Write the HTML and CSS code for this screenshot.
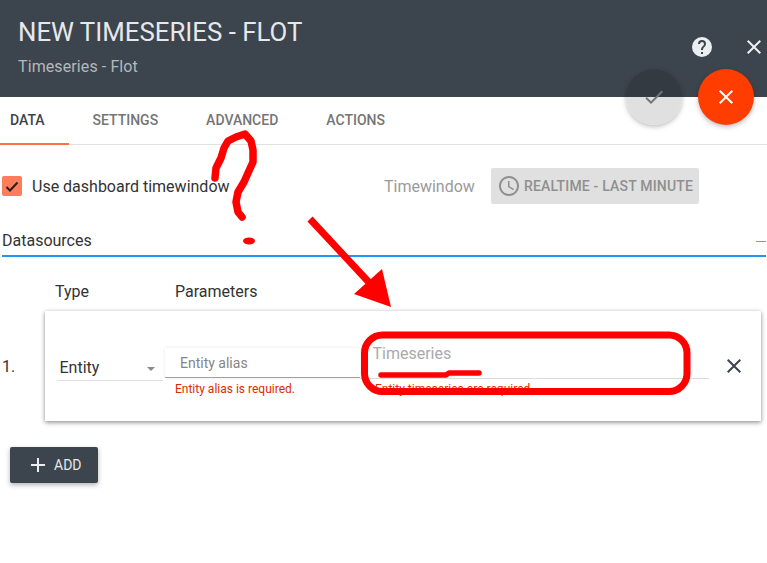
FILE: index.html
```html
<!DOCTYPE html>
<html lang="en">
<head>
<meta charset="utf-8">
<title>New Timeseries - Flot</title>
<link rel="stylesheet" href="styles.css">
</head>
<body>
<div class="page">
  <header class="header">
    <div class="titles">
      <h1 class="title">NEW TIMESERIES - FLOT</h1>
      <div class="subtitle">Timeseries - Flot</div>
    </div>
    <div class="header-actions">
      <svg class="icon-help" viewBox="0 0 24 24"><path fill="#eceff1" d="M12 2a10 10 0 1 0 0 20 10 10 0 0 0 0-20zm1 17h-2v-2h2v2zm2.07-7.75-.9.92C13.45 12.9 13 13.5 13 15h-2v-.5c0-1.1.45-2.1 1.17-2.83l1.24-1.26c.37-.36.59-.86.59-1.41a2 2 0 0 0-4 0H8a4 4 0 0 1 8 0c0 .88-.36 1.68-.93 2.25z"/></svg>
      <svg class="icon-close" viewBox="0 0 24 24"><path fill="#eceff1" d="M19 6.41 17.59 5 12 10.59 6.41 5 5 6.41 10.59 12 5 17.59 6.41 19 12 13.41 17.59 19 19 17.59 13.41 12z"/></svg>
    </div>
  </header>

  <nav class="tabs">
    <div class="tab tab-active">DATA</div>
    <div class="tab tab-settings">SETTINGS</div>
    <div class="tab tab-advanced">ADVANCED</div>
    <div class="tab tab-actions">ACTIONS</div>
  </nav>

  <main class="content">
    <div class="timewindow-row">
      <div class="check-group">
        <span class="checkbox">
          <svg viewBox="0 0 20 20"><path d="M4.500 11 8 14.500 15.500 6.500" fill="none" stroke="#212121" stroke-width="2"/></svg>
        </span>
        <span class="check-label">Use dashboard timewindow</span>
      </div>
      <div class="timewindow-group">
        <span class="timewindow-label">Timewindow</span>
        <div class="timewindow-btn">
          <svg class="icon-clock" viewBox="0 0 24 24"><path fill="#8f8f8f" d="M11.990 2C6.470 2 2 6.480 2 12s4.470 10 9.990 10C17.520 22 22 17.520 22 12S17.520 2 11.990 2zM12 20c-4.420 0-8-3.580-8-8s3.580-8 8-8 8 3.580 8 8-3.580 8-8 8zm.5-13H11v6l5.250 3.150.75-1.230-4.500-2.670z"/></svg>
          <span>REALTIME - LAST MINUTE</span>
        </div>
      </div>
    </div>

    <div class="section-head">
      <span>Datasources</span>
      <span class="collapse"></span>
    </div>

    <div class="columns">
      <span class="col-type">Type</span>
      <span>Parameters</span>
    </div>

    <div class="source-row">
      <span class="source-index">1.</span>
      <div class="card">
        <div class="select">
          <span>Entity</span>
          <span class="caret"></span>
        </div>
        <div class="alias-field">
          <div class="alias-input">Entity alias</div>
          <div class="error alias-error">Entity alias is required.</div>
        </div>
        <div class="series-field">
          <div class="series-input">Timeseries</div>
          <div class="error series-error">Entity timeseries are required.</div>
        </div>
        <svg class="icon-remove" viewBox="0 0 24 24"><path fill="#3c444d" d="M19 6.410 17.590 5 12 10.590 6.410 5 5 6.410 10.590 12 5 17.590 6.410 19 12 13.410 17.590 19 19 17.590 13.410 12z"/></svg>
      </div>
    </div>

    <button class="add-btn" type="button">
      <svg class="icon-plus" viewBox="0 0 24 24"><path fill="#eceff1" d="M19 13h-6v6h-2v-6H5v-2h6V5h2v6h6v2z"/></svg>
      <span>ADD</span>
    </button>
  </main>

  <div class="fab fab-apply">
    <svg viewBox="0 0 24 24"><path fill="#757575" d="M9 16.170 4.830 12l-1.420 1.410L9 19 21 7l-1.410-1.410z"/></svg>
  </div>
  <div class="fab fab-cancel">
    <svg viewBox="0 0 24 24"><path fill="#fff" d="M19 6.410 17.590 5 12 10.590 6.410 5 5 6.410 10.590 12 5 17.590 6.410 19 12 13.410 17.590 19 19 17.590 13.410 12z"/></svg>
  </div>

  <svg class="scribbles" viewBox="0 0 767 563">
    <path class="mark mark-q" d="M215 178 L216 168 L221 158 L224 148 L228 141 L236 137 L245 134 L251 141 L253 150 L253 162 L248 173 L244 182 L238 192 L236 202 L238 212 L242 217"/>
    <ellipse class="mark-fill" cx="249" cy="241" rx="6" ry="3.400"/>
    <path class="mark mark-arrow" d="M310 219 L378 292"/>
    <polygon class="mark-fill" points="354,294 382,269 391,307"/>
    <rect class="mark mark-box" x="364.500" y="335" width="322.500" height="56.500" rx="18"/>
    <path class="mark mark-under" d="M381 375 L446 375 L449 373 L479 373"/>
  </svg>
</div>
</body>
</html>
```

FILE: styles.css
```css
* { box-sizing: border-box; }

html, body {
  margin: 0;
  padding: 0;
  background: #fff;
}

.page {
  position: relative;
  width: 767px;
  height: 563px;
  overflow: hidden;
  font-family: Roboto, "Liberation Sans", sans-serif;
  color: #333;
}

.header {
  height: 97px;
  background: #3c444d;
  display: flex;
  justify-content: space-between;
  padding: 18px 0 0 18px;
}

.title {
  margin: 0;
  font-size: 25.800px;
  line-height: 28px;
  font-weight: 400;
  color: #e6e8ea;
}

.subtitle {
  margin-top: 12px;
  font-size: 16px;
  letter-spacing: .1px;
  line-height: 18px;
  color: #b4b8bc;
}

.header-actions {
  display: flex;
  gap: 28px;
  padding: 17px 1px 0 0;
}

.icon-help, .icon-close {
  width: 24px;
  height: 24px;
}

.tabs {
  height: 48px;
  display: flex;
  border-bottom: 1px solid #e0e0e0;
}

.tab {
  font-size: 14px;
  font-weight: 500;
  line-height: 47px;
  color: #757575;
  height: 48px;
}

.tab-active {
  width: 69px;
  padding-left: 10px;
  color: #3c444d;
  border-bottom: 2px solid #ff7043;
}

.tab-settings { margin-left: 23.500px; }
.tab-advanced { margin-left: 48px; }
.tab-actions { margin-left: 48px; }

.content {
  padding: 23px 0 0 2px;
}

.timewindow-row {
  display: flex;
  align-items: center;
  height: 36px;
}

.check-group {
  display: flex;
  align-items: center;
  width: 382px;
}

.checkbox {
  width: 20px;
  height: 20px;
  border-radius: 2px;
  background: #ff7d5c;
  display: flex;
}

.check-label {
  margin-left: 10px;
  font-size: 16px;
  color: #333;
}

.timewindow-group {
  display: flex;
  align-items: center;
}

.timewindow-label {
  font-size: 16px;
  color: #9a9a9a;
  width: 107px;
}

.timewindow-btn {
  width: 208px;
  height: 36px;
  background: #e0e0e0;
  border-radius: 2px;
  display: flex;
  align-items: center;
  gap: 3px;
  padding-left: 6px;
  font-size: 14px;
  font-weight: 500;
  letter-spacing: .18px;
  color: #8f8f8f;
}

.icon-clock {
  width: 24px;
  height: 24px;
}

.section-head {
  margin-top: 17px;
  height: 36px;
  width: 764px;
  padding-top: 10px;
  border-bottom: 2px solid #2196f3;
  display: flex;
  justify-content: space-between;
  font-size: 16px;
  line-height: 19px;
  color: #333;
}

.collapse {
  width: 10px;
  height: 1px;
  margin-top: 10px;
  background: #5aa6e0;
}

.columns {
  display: flex;
  margin-top: 25px;
  padding-left: 53px;
  font-size: 16px;
  line-height: 19px;
  color: #333;
}

.col-type { width: 120px; }

.source-row {
  display: flex;
  align-items: center;
  margin-top: 10px;
}

.source-index {
  width: 43px;
  font-size: 16px;
}

.card {
  width: 716px;
  height: 110px;
  background: #fff;
  box-shadow: 0 1px 4px rgba(0,0,0,.3), 0 2px 5px rgba(0,0,0,.2);
  display: flex;
  align-items: flex-start;
  padding: 37px 0 0 12px;
}

.select {
  width: 106px;
  height: 33px;
  padding: 10px 2px 0 2.500px;
  border-bottom: 1px solid #e0e0e0;
  display: flex;
  justify-content: space-between;
  font-size: 16px;
  line-height: 20px;
  color: #333;
}

.caret {
  width: 0;
  height: 0;
  margin: 9px 6px 0 0;
  border: 4px solid transparent;
  border-top: 4px solid #8a8a8a;
  border-bottom: 0;
}

.alias-field {
  width: 195px;
  margin-left: 2px;
}

.alias-input {
  height: 30px;
  padding: 6px 0 0 15px;
  font-size: 14px;
  line-height: 18px;
  color: #858585;
  background: #fff;
  border-bottom: 1px solid #a0a0a0;
  box-shadow: 0 0 3px rgba(0,0,0,.1);
}

.error {
  font-size: 12px;
  line-height: 14px;
  color: #dd2c00;
}

.alias-error {
  margin: 4px 0 0 10px;
}

.series-field {
  width: 349px;
  margin-top: -4px;
}

.series-input {
  height: 35px;
  padding: 0 0 0 12.500px;
  font-size: 16px;
  line-height: 20px;
  color: #aaa;
  border-bottom: 1px solid #dcdcdc;
}

.series-error {
  margin: 3px 0 0 15px;
}

.icon-remove {
  width: 24px;
  height: 24px;
  margin: 6px 0 0 13px;
}

.add-btn {
  display: flex;
  align-items: center;
  width: 88px;
  height: 36px;
  margin: 26px 0 0 8px;
  padding: 0 0 0 16px;
  border: 0;
  border-radius: 2px;
  background: #3c444d;
  box-shadow: 0 2px 5px rgba(0,0,0,.3);
  color: #e6e8ea;
  font-family: inherit;
  font-size: 14px;
  font-weight: 400;
  gap: 4px;
}

.icon-plus {
  width: 24px;
  height: 24px;
}

.fab {
  position: absolute;
  top: 69px;
  width: 56px;
  height: 56px;
  border-radius: 50%;
  display: flex;
  align-items: center;
  justify-content: center;
  box-shadow: 0 2px 5px rgba(0,0,0,.26);
}

.fab svg {
  width: 24px;
  height: 24px;
}

.fab-apply {
  left: 626px;
  background: linear-gradient(to bottom, #333a42 0, #333a42 28px, #e0e0e0 28px);
}

.fab-cancel {
  left: 698px;
  background: #ff3d00;
}

.scribbles {
  position: absolute;
  left: 0;
  top: 0;
  width: 767px;
  height: 563px;
  pointer-events: none;
}

.mark {
  fill: none;
  stroke: #f00;
  stroke-linecap: round;
  stroke-linejoin: round;
}

.mark-q { stroke-width: 7.500; }
.mark-arrow { stroke-width: 7; stroke-linecap: butt; }
.mark-box { stroke-width: 7; }
.mark-under { stroke-width: 5.500; }
.mark-fill { fill: #f00; }
```
